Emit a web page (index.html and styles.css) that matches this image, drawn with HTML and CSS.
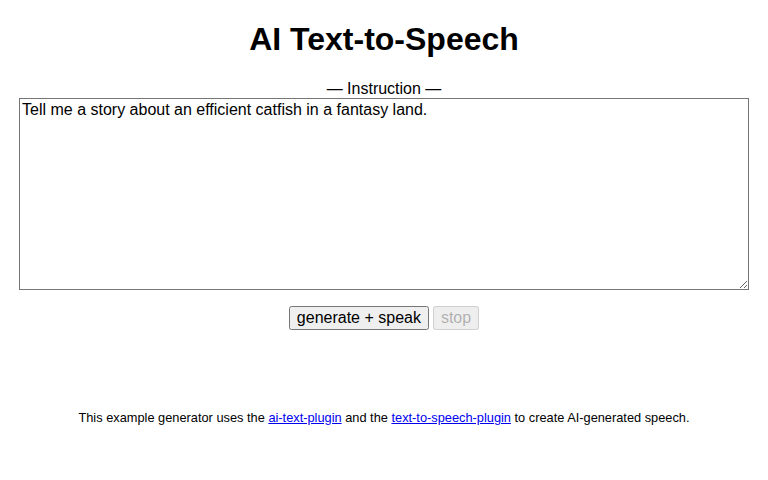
FILE: index.html
```html
<!DOCTYPE html>
<html>
<head>
<meta charset="utf-8">
<link rel="stylesheet" href="styles.css">
</head>
<body>
<h1 class="title">AI Text-to-Speech</h1>
<div class="label">— Instruction —</div>
<textarea class="instruction">Tell me a story about an efficient catfish in a fantasy land.</textarea>
<div class="actions">
  <button class="btn">generate + speak</button>
  <button class="btn" disabled>stop</button>
</div>
<p class="footer">This example generator uses the <a href="#">ai-text-plugin</a> and the <a href="#">text-to-speech-plugin</a> to create AI-generated speech.</p>
</body>
</html>
```
FILE: styles.css
```css
html, body {
  margin: 0;
  padding: 0;
  background: #fff;
}
body {
  font-family: "Liberation Sans", Arial, sans-serif;
  color: #000;
  text-align: center;
}
.title {
  font-size: 32px;
  font-weight: bold;
  margin: 21px 0 22px;
  line-height: 37px;
}
.label {
  font-size: 16px;
  line-height: 18px;
}
.instruction {
  display: block;
  box-sizing: border-box;
  width: 730px;
  height: 192px;
  margin: 0 auto;
  padding: 2px;
  font-family: "Liberation Sans", Arial, sans-serif;
  font-size: 16px;
  border: 1px solid #767676;
  color: #000;
}
.actions {
  margin-top: 16px;
  display: flex;
  justify-content: center;
  gap: 4px;
}
.btn {
  font-family: "Liberation Sans", Arial, sans-serif;
  font-size: 16px;
  height: 24px;
  padding: 1px 6px;
}
.footer {
  font-size: 12.8px;
  margin: 80px 0 0;
}
.footer a {
  color: #0000ee;
}
```
